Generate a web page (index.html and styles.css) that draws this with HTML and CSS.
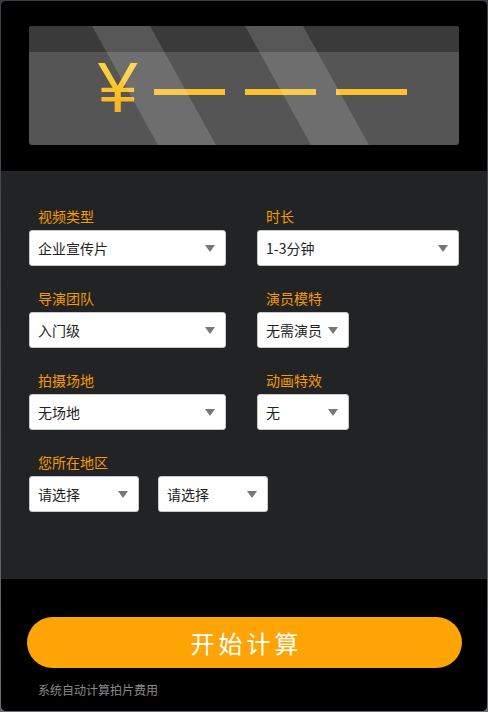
FILE: index.html
```html
<!DOCTYPE html>
<html lang="zh-CN">
<head>
<meta charset="utf-8">
<title>拍片费用计算</title>
<link rel="stylesheet" href="styles.css">
</head>
<body>
<div class="app">
  <section class="top">
    <div class="screen">
      <div class="band"></div>
      <div class="readout">
        <span class="yen">¥</span>
        <div class="dashes"><i></i><i></i><i></i></div>
      </div>
      <span class="stripe s1"></span>
      <span class="stripe s2"></span>
    </div>
  </section>

  <section class="form">
    <div class="grid">
      <div class="field">
        <div class="label">视频类型</div>
        <div class="select w-full">企业宣传片<span class="arrow"></span></div>
      </div>
      <div class="field">
        <div class="label">时长</div>
        <div class="select w-full">1-3分钟<span class="arrow"></span></div>
      </div>
      <div class="field">
        <div class="label">导演团队</div>
        <div class="select w-full">入门级<span class="arrow"></span></div>
      </div>
      <div class="field">
        <div class="label">演员模特</div>
        <div class="select w-small">无需演员<span class="arrow"></span></div>
      </div>
      <div class="field">
        <div class="label">拍摄场地</div>
        <div class="select w-full">无场地<span class="arrow"></span></div>
      </div>
      <div class="field">
        <div class="label">动画特效</div>
        <div class="select w-small">无<span class="arrow"></span></div>
      </div>
    </div>
    <div class="field">
      <div class="label">您所在地区</div>
      <div class="region">
        <div class="select w-region">请选择<span class="arrow"></span></div>
        <div class="select w-region">请选择<span class="arrow"></span></div>
      </div>
    </div>
  </section>

  <section class="bottom">
    <button class="go">开始计算</button>
    <p class="note">系统自动计算拍片费用</p>
  </section>
</div>
</body>
</html>
```

FILE: styles.css
```css
* { box-sizing: border-box; }
html, body { margin: 0; padding: 0; }
body {
  width: 488px;
  height: 712px;
  background: linear-gradient(#3a3d44, #6a6c70);
  font-family: "Noto Sans CJK SC", "Noto Sans", sans-serif;
  overflow: hidden;
}
.app {
  margin: 1px;
  width: 486px;
  height: 710px;
  border-radius: 5px;
  overflow: hidden;
  background: #000;
  display: flex;
  flex-direction: column;
}
.top {
  height: 170px;
  padding: 25px 28px 0;
  background: #000;
}
.screen {
  position: relative;
  height: 119px;
  border-radius: 3px;
  background: #555555;
  overflow: hidden;
  display: flex;
  flex-direction: column;
}
.band {
  height: 26px;
  background: #3a3a3a;
  flex: none;
}
.readout {
  display: flex;
  align-items: flex-start;
  padding-left: 69px;
}
.yen {
  font-family: "Liberation Sans", Arial, sans-serif;
  font-size: 71px;
  line-height: 71px;
  background: linear-gradient(#fed33a 20%, #f7ab1c 95%);
  -webkit-background-clip: text;
  background-clip: text;
  color: transparent;
}
.dashes {
  display: flex;
  gap: 20px;
  margin-top: 37px;
  margin-left: 16px;
}
.dashes i {
  display: block;
  width: 71px;
  height: 6px;
  background: #fcc22e;
}
.stripe {
  position: absolute;
  top: 0;
  width: 58px;
  height: 119px;
  background: rgba(255, 255, 255, 0.15);
  transform: skewX(29deg);
}
.s1 { left: 96px; }
.s2 { left: 249px; }

.form {
  height: 408px;
  background: #222325;
  padding: 35px 28px 0;
}
.grid {
  display: grid;
  grid-template-columns: 197px 202px;
  column-gap: 31px;
  row-gap: 22px;
  margin-bottom: 22px;
}
.label {
  color: #f59a00;
  font-size: 14px;
  line-height: 20px;
  padding-left: 9px;
  margin-bottom: 4px;
}
.select {
  position: relative;
  height: 36px;
  background: #fff;
  border: 1px solid #c9c9c9;
  border-radius: 3px;
  color: #222;
  font-size: 14px;
  line-height: 34px;
  padding-left: 8px;
}
.w-full { width: 100%; }
.w-small { width: 92px; }
.w-region { width: 110px; }
.arrow {
  position: absolute;
  right: 10px;
  top: 14px;
  width: 0;
  height: 0;
  border-left: 5.5px solid transparent;
  border-right: 5.5px solid transparent;
  border-top: 7px solid #777;
}
.region {
  display: flex;
  gap: 19px;
}

.bottom {
  flex: 1;
  background: #000;
  padding: 38px 25px 0 26px;
}
.go {
  display: block;
  width: 435px;
  height: 51px;
  border: 0;
  border-radius: 26px;
  background: #fea405;
  color: #fff;
  font-family: "Noto Sans CJK SC", "Noto Sans", sans-serif;
  font-size: 24px;
  letter-spacing: 4px;
  padding: 0 0 0 4px;
  line-height: 51px;
}
.note {
  margin: 13px 0 0 11px;
  font-size: 12px;
  line-height: 18px;
  color: #8a8a8a;
}
```
